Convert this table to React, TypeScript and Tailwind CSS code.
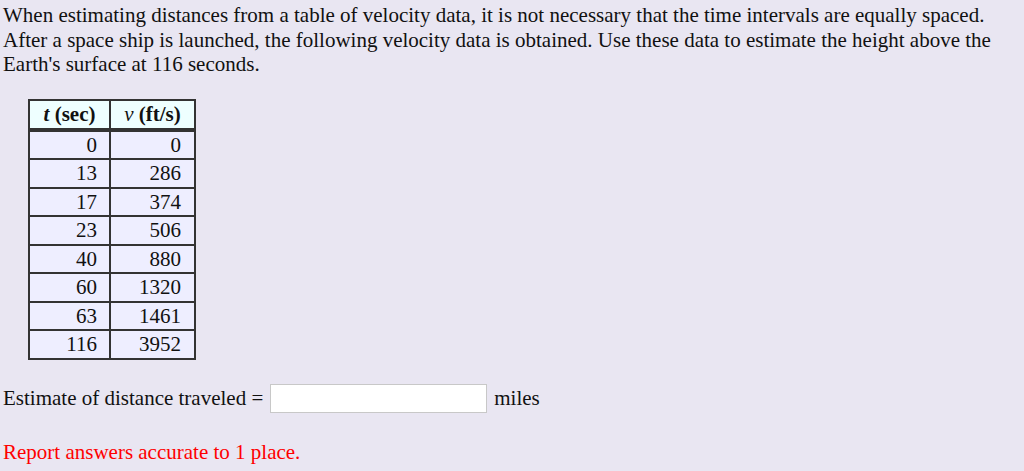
const rows: [number, number][] = [
  [0, 0],
  [13, 286],
  [17, 374],
  [23, 506],
  [40, 880],
  [60, 1320],
  [63, 1461],
  [116, 3952],
];

export default function App() {
  return (
    <div className="w-[1024px] h-[471px] bg-[#e9e6f2] text-[#111] font-['Liberation_Serif','Times_New_Roman',serif] text-[21px] leading-[24.5px] overflow-hidden">
      <p className="pl-[3px] pt-[3px] w-[1010px]">
        When estimating distances from a table of velocity data, it is not necessary that the time intervals are equally spaced.
        After a space ship is launched, the following velocity data is obtained. Use these data to estimate the height above the
        Earth's surface at 116 seconds.
      </p>

      <table className="ml-[28px] mt-[22px] border border-[#333] border-separate border-spacing-0">
        <thead>
          <tr className="bg-[#eeffff]">
            <th className="w-[81px] h-[31px] border border-b-[3px] border-[#333] font-bold text-center px-1">
              <i>t</i> (sec)
            </th>
            <th className="w-[85px] h-[31px] border border-b-[3px] border-[#333] font-bold text-center px-1">
              <i className="font-normal">v</i> (ft/s)
            </th>
          </tr>
        </thead>
        <tbody>
          {rows.map(([t, v]) => (
            <tr key={t} className="bg-[#eeeeff]">
              <td className="h-[28.5px] border border-[#333] text-right pr-[12px]">{t}</td>
              <td className="h-[28.5px] border border-[#333] text-right pr-[13px]">{v}</td>
            </tr>
          ))}
        </tbody>
      </table>

      <div className="flex items-center pl-[3px] mt-[24px]">
        <span>Estimate of distance traveled =</span>
        <input
          type="text"
          className="ml-[7px] w-[217px] h-[29px] bg-white border border-[#c8c8c8] outline-none"
        />
        <span className="ml-[7px]">miles</span>
      </div>

      <p className="pl-[3px] mt-[27px] text-[#ff0000]">Report answers accurate to 1 place.</p>
    </div>
  );
}
